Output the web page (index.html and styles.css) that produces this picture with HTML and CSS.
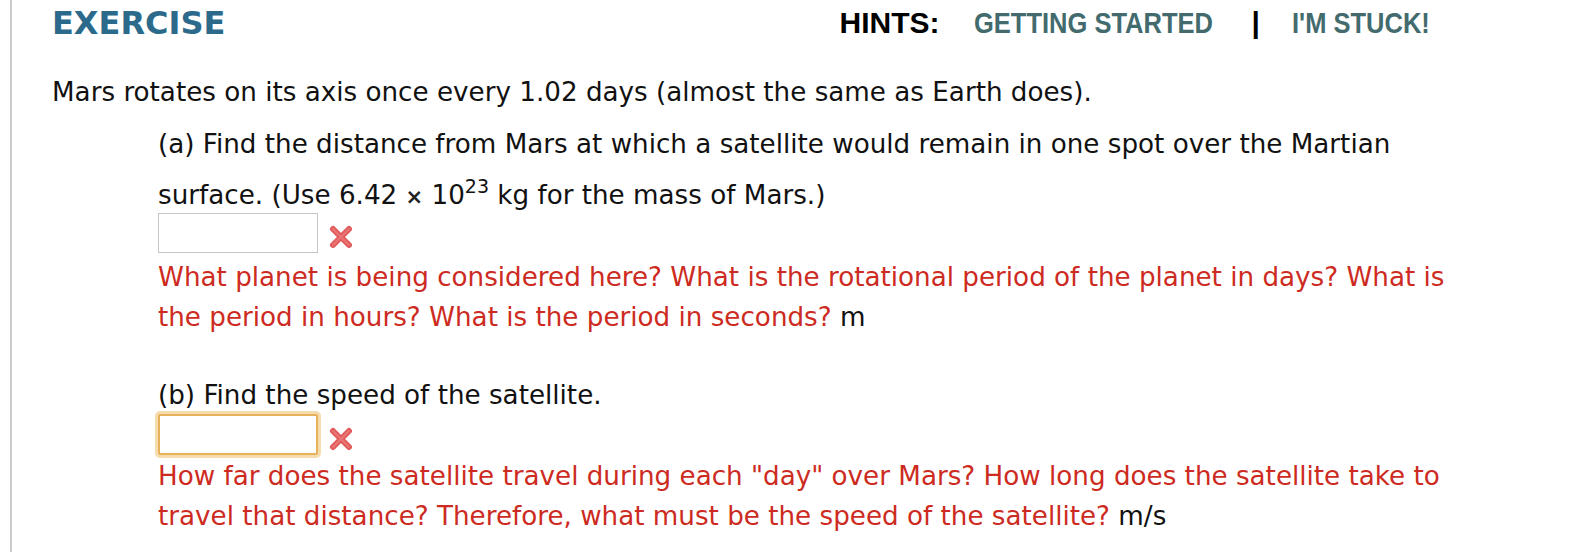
FILE: index.html
```html
<!DOCTYPE html>
<html lang="en">
<head>
<meta charset="utf-8">
<title>Exercise</title>
<link rel="stylesheet" href="styles.css">
</head>
<body>
<div class="page">
  <header class="head">
    <h1 class="title">EXERCISE</h1>
    <nav class="hints">
      <span class="hints-label">HINTS:</span>
      <a class="hint-link hint-start" href="#"><span class="narrow">GETTING STARTED</span></a>
      <span class="sep">|</span>
      <a class="hint-link hint-stuck" href="#"><span class="narrow">I'M STUCK!</span></a>
    </nav>
  </header>

  <p class="intro">Mars rotates on its axis once every 1.02 days (almost the same as Earth does).</p>

  <div class="part">
    <p class="question q-a">(a) Find the distance from Mars at which a satellite would remain in one spot over the Martian<br>surface. (Use 6.42 <span class="times">&times;</span> 10<sup>23</sup> kg for the mass of Mars.)</p>
    <div class="answer">
      <input class="box" type="text">
      <svg class="wrong" width="26" height="24" viewBox="0 0 26 24" aria-hidden="true">
        <path d="M5 4 L21 20 M21 4 L5 20" stroke="#e35a5a" stroke-width="6" stroke-linecap="round"/>
        <path d="M5 4 L21 20 M21 4 L5 20" stroke="#ee8a88" stroke-width="2" stroke-linecap="round" opacity="0.6"/>
      </svg>
    </div>
    <p class="feedback"><span class="hint-text">What planet is being considered here? What is the rotational period of the planet in days? What is<br>the period in hours? What is the period in seconds?</span> m</p>
  </div>

  <div class="part part-b">
    <p class="question q-b">(b) Find the speed of the satellite.</p>
    <div class="answer answer-b">
      <input class="box box-focus" type="text">
      <svg class="wrong" width="26" height="24" viewBox="0 0 26 24" aria-hidden="true">
        <path d="M5 4 L21 20 M21 4 L5 20" stroke="#e35a5a" stroke-width="6" stroke-linecap="round"/>
        <path d="M5 4 L21 20 M21 4 L5 20" stroke="#ee8a88" stroke-width="2" stroke-linecap="round" opacity="0.6"/>
      </svg>
    </div>
    <p class="feedback feedback-b"><span class="hint-text">How far does the satellite travel during each "day" over Mars? How long does the satellite take to<br>travel that distance? Therefore, what must be the speed of the satellite?</span> m/s</p>
  </div>
</div>
</body>
</html>
```
FILE: styles.css
```css
html, body {
  margin: 0;
  padding: 0;
  background: #fff;
}

body {
  font-family: "DejaVu Sans", Verdana, sans-serif;
  color: #111;
}

.page {
  margin-left: 10px;
  border-left: 2px solid #cccccc;
  min-height: 552px;
  padding-left: 40px;
  box-sizing: border-box;
}

.head {
  display: flex;
  align-items: center;
  width: 1377px;
  height: 46px;
}

.title {
  margin: 0;
  font-family: "DejaVu Sans", Verdana, sans-serif;
  font-weight: bold;
  font-size: 32px;
  color: #2b6a8b;
  line-height: 44px;
}

.hints {
  margin-left: auto;
  display: flex;
  align-items: center;
  font-family: "Liberation Sans", Arial, sans-serif;
  font-weight: bold;
}

.hints-label {
  font-size: 30px;
  color: #000;
  margin-right: 34px;
}

.hint-link {
  display: block;
  font-size: 30px;
  color: #436b6e;
  text-decoration: none;
  white-space: nowrap;
}

.hint-start {
  width: 241px;
}

.hint-stuck {
  width: 137px;
}

.narrow {
  display: inline-block;
  transform: scaleX(0.85);
  transform-origin: left center;
}

.sep {
  font-size: 30px;
  color: #000;
  margin: 0 32px 0 37px;
}

.intro {
  margin: 26px 0 0;
  font-size: 26.2px;
  line-height: 40px;
}

.part {
  margin-left: 106px;
}

.question {
  margin: 12px 0 0;
  font-size: 26.2px;
  line-height: 40px;
}

.question sup {
  font-size: 19px;
  line-height: 44px;
  vertical-align: 11px;
}

.times {
  font-size: 21px;
  font-weight: bold;
  color: #222;
}

.answer {
  display: flex;
  align-items: center;
  gap: 10px;
  height: 40px;
  margin-top: -4px;
}

.box {
  width: 160px;
  height: 40px;
  box-sizing: border-box;
  border: 1px solid #c6c6c6;
  margin: 0;
  padding: 0;
  background: #fff;
}

.box-focus {
  height: 41px;
  border: 2px solid #e7b25a;
  box-shadow: 0 0 0 3px #f6dcae;
  border-radius: 2px;
}

.wrong {
  display: block;
  margin-top: 8px;
}

.feedback {
  margin: 4px 0 0;
  font-size: 26.2px;
  line-height: 40px;
}

.hint-text {
  color: #cd2b22;
}

.part-b {
  margin-top: 39px;
}

.q-b {
  margin-top: 0;
  line-height: 38px;
}

.answer-b {
  margin-top: 0;
  height: 41px;
}

.feedback-b {
  margin-top: 1px;
}
```
